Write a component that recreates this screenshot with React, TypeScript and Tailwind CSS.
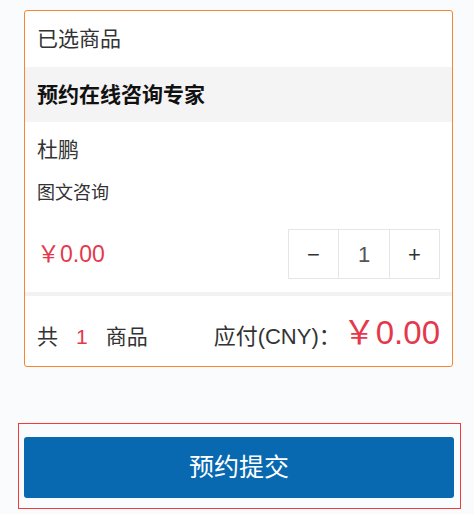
import React from 'react';

const font = { fontFamily: '"Liberation Sans", "Noto Sans CJK SC", sans-serif' };

function Stepper({ value }: { value: number }) {
  return (
    <div className="flex h-[50px] border border-[#e6e6e6] text-[#333]">
      <div className="flex w-[49px] items-center justify-center text-[22px]">−</div>
      <div className="flex w-[52px] items-center justify-center border-x border-[#e6e6e6] text-[22px] text-[#555]">
        {value}
      </div>
      <div className="flex w-[49px] items-center justify-center text-[22px]">+</div>
    </div>
  );
}

export default function App() {
  return (
    <div className="min-h-[514px] w-[474px] bg-[#f9fbfd] pt-[10px]" style={font}>
      {/* 订单卡片 */}
      <div className="ml-6 w-[429px] overflow-hidden rounded-[3px] border border-[#f7852f] bg-white">
        <div className="flex h-[56px] items-center px-3 text-[21px] text-[#333]">已选商品</div>
        <div className="flex h-[55px] items-center bg-[#f4f4f4] px-3 text-[21px] font-bold text-[#111]">
          预约在线咨询专家
        </div>
        <div className="flex flex-col px-3 pt-[14px] pb-[13px]">
          <div className="flex h-[28px] items-center text-[21px] text-[#333]">杜鹏</div>
          <div className="mt-[15px] flex h-[28px] items-center text-[18px] text-[#333]">图文咨询</div>
          <div className="mt-[22px] flex items-center justify-between">
            <span className="text-[23px] text-[#e5384d]">￥0.00</span>
            <Stepper value={1} />
          </div>
        </div>
        <div className="h-[4px] bg-[#f2f2f2]" />
        <div className="flex h-[70px] items-end justify-between px-3 pb-[15px]">
          <div className="flex items-baseline text-[21px] leading-[28px] text-[#333]">
            <span>共</span>
            <span className="mx-[18px] text-[#e5384d]">1</span>
            <span>商品</span>
          </div>
          <div className="flex items-baseline">
            <span className="mr-[2px] text-[22px] leading-[28px] text-[#333]">应付(CNY)：</span>
            <span className="text-[33px] leading-[36px] text-[#e5384d]">￥0.00</span>
          </div>
        </div>
      </div>

      {/* 提交按钮 */}
      <div className="mt-[56px] ml-[18px] w-[443px] border border-[#f23c3c] pt-[13px] pr-[6px] pb-[10px] pl-[5px]">
        <button className="flex h-[61px] w-full items-center justify-center rounded-[3px] bg-[#0868b0] text-[25px] text-white">
          预约提交
        </button>
      </div>
    </div>
  );
}
